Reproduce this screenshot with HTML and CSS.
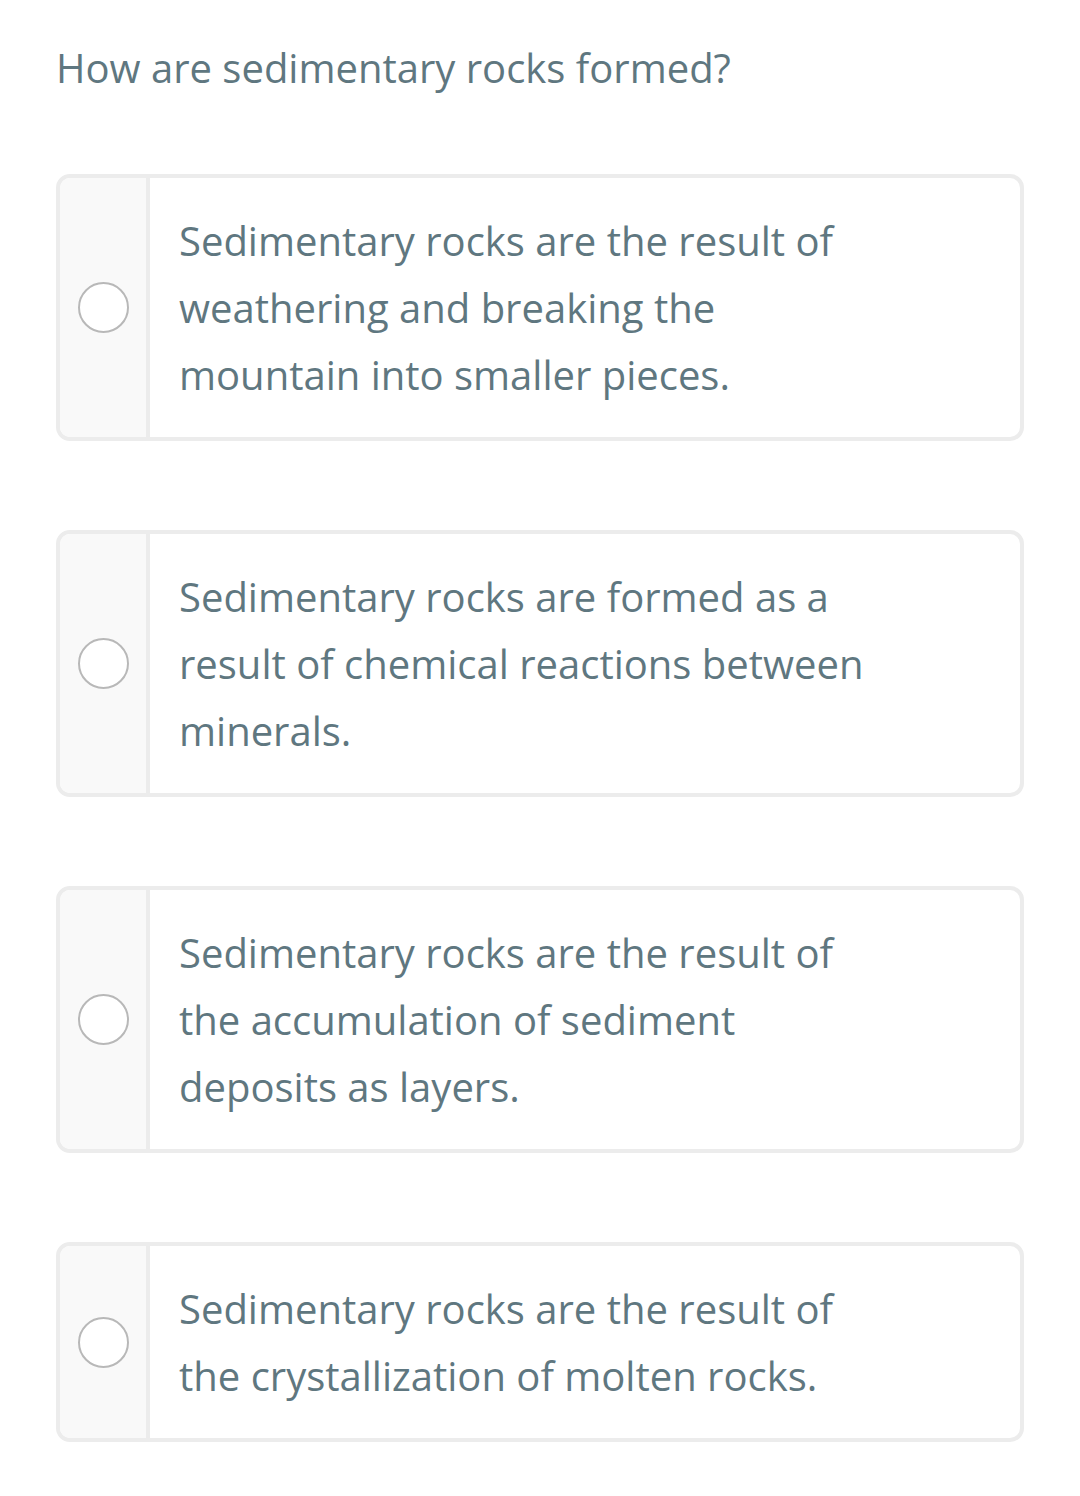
FILE: index.html
```html
<!DOCTYPE html>
<html lang="en">
<head>
    <meta charset="UTF-8">
    <meta name="viewport" content="width=device-width, initial-scale=1.0">
    <title>Quiz</title>
    <link rel="stylesheet" href="styles.css">
</head>
<body>
    <div class="quiz">
        <h1 class="question">How are sedimentary rocks formed?</h1>

        <div class="options">
            <label class="option">
                <span class="option-check"><span class="radio"></span></span>
                <span class="option-text">Sedimentary rocks are the result of weathering and breaking the mountain into smaller pieces.</span>
            </label>

            <label class="option">
                <span class="option-check"><span class="radio"></span></span>
                <span class="option-text">Sedimentary rocks are formed as a result of chemical reactions between minerals.</span>
            </label>

            <label class="option">
                <span class="option-check"><span class="radio"></span></span>
                <span class="option-text">Sedimentary rocks are the result of the accumulation of sediment deposits as layers.</span>
            </label>

            <label class="option">
                <span class="option-check"><span class="radio"></span></span>
                <span class="option-text">Sedimentary rocks are the result of the crystallization of molten rocks.</span>
            </label>
        </div>
    </div>
</body>
</html>
```

FILE: styles.css
```css
* {
    margin: 0;
    padding: 0;
    box-sizing: border-box;
}

body {
    font-family: "Open Sans", "Noto Sans", sans-serif;
    background-color: #fff;
    color: #5f7780;
}

.quiz {
    padding: 38px 56px;
}

.question {
    font-size: 40px;
    font-weight: 400;
    line-height: 60px;
    margin-bottom: 76px;
}

.options {
    display: flex;
    flex-direction: column;
    gap: 89px;
}

.option {
    display: flex;
    width: 968px;
    border: 4px solid #ececec;
    border-radius: 14px;
    overflow: hidden;
    cursor: pointer;
}

.option-check {
    flex: 0 0 90px;
    display: flex;
    align-items: center;
    justify-content: center;
    background-color: #f9f9f9;
    border-right: 4px solid #ececec;
}

.radio {
    width: 51px;
    height: 51px;
    border: 2px solid #b8b8b8;
    border-radius: 50%;
    background-color: #fff;
}

.option-text {
    flex: 1;
    padding: 29px 120px 29px 29px;
    font-size: 40px;
    line-height: 67px;
}
```
